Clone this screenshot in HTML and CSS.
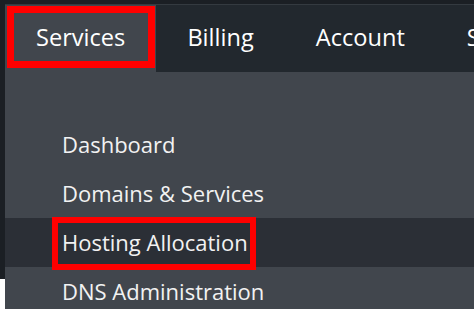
FILE: index.html
```html
<!DOCTYPE html>
<html lang="en">
<head>
    <meta charset="UTF-8">
    <meta name="viewport" content="width=device-width, initial-scale=1.0">
    <title>Services menu</title>
    <link rel="stylesheet" href="styles.css">
</head>
<body>
    <div class="shell">
        <div class="rail"></div>
        <div class="main">
            <div class="topline"></div>
            <nav class="nav">
                <a class="tab active marked" href="#">Services</a>
                <a class="tab" href="#">Billing</a>
                <a class="tab" href="#">Account</a>
                <a class="tab" href="#">Support</a>
            </nav>
            <ul class="dropdown">
                <li><a href="#">Dashboard</a></li>
                <li><a href="#">Domains &amp; Services</a></li>
                <li class="current"><a href="#"><span class="marked">Hosting Allocation</span></a></li>
                <li><a href="#">DNS Administration</a></li>
            </ul>
        </div>
    </div>
</body>
</html>
```

FILE: styles.css
```css
:root {
    --frame: #1b1f24;
    --nav: #22282e;
    --menu: #41464d;
    --menu-current: #2b2f36;
    --text: #ffffff;
    --mark: #ff0000;
}

* {
    margin: 0;
    padding: 0;
    box-sizing: border-box;
}

body {
    font-family: "Open Sans", "DejaVu Sans", sans-serif;
    background-color: #ffffff;
    color: var(--text);
    width: 474px;
    height: 309px;
    overflow: hidden;
}

.shell {
    display: flex;
    align-items: flex-start;
}

.rail {
    width: 5px;
    height: 279px;
    background-color: var(--frame);
    flex-shrink: 0;
}

.main {
    flex: 1;
    min-width: 0;
}

.topline {
    height: 5px;
    background-color: var(--frame);
    border-bottom: 1px solid #343a40;
}

.nav {
    height: 67px;
    background-color: var(--nav);
    display: flex;
    white-space: nowrap;
    overflow: hidden;
}

.tab {
    display: flex;
    align-items: center;
    padding: 0 31px 4px;
    color: var(--text);
    text-decoration: none;
    font-size: 23.6px;
    position: relative;
}

.tab.active {
    background-color: var(--menu);
}

.marked::after {
    content: "";
    position: absolute;
    border: 7px solid var(--mark);
    pointer-events: none;
}

.tab.marked::after {
    top: 1px;
    bottom: 4px;
    left: 2px;
    right: 1px;
}

.dropdown {
    list-style: none;
    background-color: var(--menu);
    padding-top: 48px;
    height: 237px;
}

.dropdown li {
    height: 49px;
    line-height: 49px;
    padding-left: 57px;
    font-size: 22px;
}

.dropdown li.current {
    background-color: var(--menu-current);
}

.dropdown a {
    color: #f2f2f2;
    text-decoration: none;
}

.dropdown .marked {
    display: inline-block;
    position: relative;
}

.dropdown .marked::after {
    top: -1px;
    bottom: -3px;
    left: -10px;
    right: -8px;
    border-width: 6px;
}
```
